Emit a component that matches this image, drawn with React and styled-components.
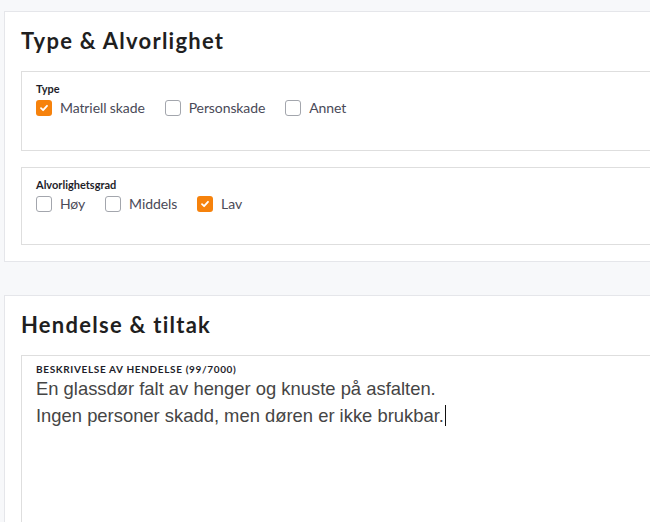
import React from 'react';
import styled, { createGlobalStyle } from 'styled-components';

const GlobalStyle = createGlobalStyle`
    html, body {
        margin: 0;
        padding: 0;
        background: #f7f8fa;
        overflow: hidden;
    }
    body {
        font-family: Lato, "Noto Sans", sans-serif;
        color: #222;
    }
`;

const Page = styled.div`
    display: flex;
    flex-direction: column;
    gap: 33px;
    padding: 11px 0 0 4px;
    width: 720px;
`;

const Card = styled.section`
    background: #fff;
    border: 1px solid #e5e6ea;
    padding: 15px 16px ${props => (props.open ? '0' : '16px')};
`;

const Title = styled.h2`
    margin: 0 0 16px;
    font-size: 22px;
    line-height: 28px;
    font-weight: 700;
    color: #1f1f1f;
    letter-spacing: 1.25px;
`;

const Stack = styled.div`
    display: flex;
    flex-direction: column;
    gap: 16px;
`;

const Fieldset = styled.div`
    border: 1px solid #dedede;
    height: ${props => props.h}px;
    box-sizing: border-box;
    padding: 10px 14px;
`;

const Legend = styled.div`
    font-size: 11px;
    line-height: 14px;
    font-weight: 700;
    color: #1e1e2a;
    margin-bottom: 3px;
`;

const Options = styled.div`
    display: flex;
    align-items: center;
    gap: 20px;
`;

const Option = styled.label`
    display: flex;
    align-items: center;
    gap: 8px;
    font-size: 14px;
    color: #4a4a58;
    letter-spacing: -0.1px;
`;

const Box = styled.span`
    width: 16px;
    height: 16px;
    box-sizing: border-box;
    border-radius: 3px;
    display: flex;
    align-items: center;
    justify-content: center;
    border: ${props => (props.checked ? 'none' : '1px solid #a3a6ad')};
    background: ${props => (props.checked ? '#f6820c' : '#fff')};
`;

const TextField = styled.div`
    border: 1px solid #dedede;
    border-bottom: none;
    height: 200px;
    padding: 7px 14px;
`;

const FieldLabel = styled.div`
    font-size: 10px;
    line-height: 12px;
    font-weight: 700;
    color: #1e1e2a;
    text-transform: uppercase;
    letter-spacing: 0.65px;
`;

const FieldText = styled.div`
    font-family: "Liberation Sans", Arial, sans-serif;
    font-size: 18.4px;
    line-height: 27px;
    color: #454545;
`;

const Caret = styled.span`
    display: inline-block;
    width: 1px;
    height: 21px;
    background: #111;
    vertical-align: -4px;
    margin-left: 1px;
`;

function Checkbox({ checked, children }) {
    return (
        <Option>
            <Box checked={checked}>
                {checked && (
                    <svg width="10" height="10" viewBox="0 0 10 10">
                        <path d="M2 5.2 L4.1 7.2 L8 2.8" fill="none" stroke="#fff" strokeWidth="1.8" strokeLinecap="round" strokeLinejoin="round" />
                    </svg>
                )}
            </Box>
            {children}
        </Option>
    );
}

export default function App() {
    return (
        <>
            <GlobalStyle />
            <Page>
                <Card>
                    <Title>Type &amp; Alvorlighet</Title>
                    <Stack>
                        <Fieldset h={80}>
                            <Legend>Type</Legend>
                            <Options>
                                <Checkbox checked>Matriell skade</Checkbox>
                                <Checkbox>Personskade</Checkbox>
                                <Checkbox>Annet</Checkbox>
                            </Options>
                        </Fieldset>
                        <Fieldset h={78}>
                            <Legend>Alvorlighetsgrad</Legend>
                            <Options>
                                <Checkbox>Høy</Checkbox>
                                <Checkbox>Middels</Checkbox>
                                <Checkbox checked>Lav</Checkbox>
                            </Options>
                        </Fieldset>
                    </Stack>
                </Card>
                <Card open>
                    <Title>Hendelse &amp; tiltak</Title>
                    <TextField>
                        <FieldLabel>Beskrivelse av hendelse (99/7000)</FieldLabel>
                        <FieldText>
                            En glassdør falt av henger og knuste på asfalten.
                            <br />
                            Ingen personer skadd, men døren er ikke brukbar.<Caret />
                        </FieldText>
                    </TextField>
                </Card>
            </Page>
        </>
    );
}
